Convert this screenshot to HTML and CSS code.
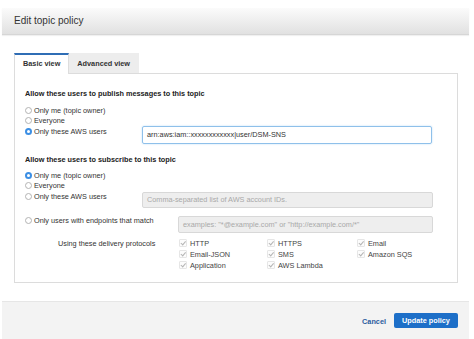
FILE: index.html
```html
<!DOCTYPE html>
<html lang="en">

<head>
    <meta charset="UTF-8">
    <meta name="viewport" content="width=device-width, initial-scale=1.0">
    <title>Edit topic policy</title>
    <link rel="stylesheet" href="styles.css">
</head>

<body>
    <div class="modal">
        <div class="modal-header">Edit topic policy</div>

        <div class="modal-body">
            <div class="tabs">
                <div class="tab active">Basic view</div>
                <div class="tab">Advanced view</div>
            </div>

            <div class="panel">
                <div class="section-title">Allow these users to publish messages to this topic</div>
                <div class="option"><span class="radio"></span>Only me (topic owner)</div>
                <div class="option"><span class="radio"></span>Everyone</div>
                <div class="option-row first">
                    <div class="option"><span class="radio checked"></span>Only these AWS users</div>
                    <div class="field focus">arn:aws:iam::xxxxxxxxxxxx|user/DSM-SNS</div>
                </div>

                <div class="section-title second">Allow these users to subscribe to this topic</div>
                <div class="option"><span class="radio checked"></span>Only me (topic owner)</div>
                <div class="option"><span class="radio"></span>Everyone</div>
                <div class="option-row ids">
                    <div class="option"><span class="radio"></span>Only these AWS users</div>
                    <div class="field disabled">Comma-separated list of AWS account IDs.</div>
                </div>
                <div class="option-row endpoints">
                    <div class="option wide"><span class="radio"></span>Only users with endpoints that match</div>
                    <div class="field disabled">examples: "*@example.com" or "http://example.com/*"</div>
                </div>

                <div class="protocols">
                    <div class="protocols-label">Using these delivery protocols</div>
                    <div class="protocol-grid">
                        <div class="check"><span class="box"></span>HTTP</div>
                        <div class="check"><span class="box"></span>HTTPS</div>
                        <div class="check"><span class="box"></span>Email</div>
                        <div class="check"><span class="box"></span>Email-JSON</div>
                        <div class="check"><span class="box"></span>SMS</div>
                        <div class="check"><span class="box"></span>Amazon SQS</div>
                        <div class="check"><span class="box"></span>Application</div>
                        <div class="check"><span class="box"></span>AWS Lambda</div>
                    </div>
                </div>
            </div>
        </div>

        <div class="modal-footer">
            <a class="cancel">Cancel</a>
            <button class="primary">Update policy</button>
        </div>
    </div>
</body>

</html>
```

FILE: styles.css
```css
body {
    margin: 0;
    background: #fff;
    font-family: "Liberation Sans", Arial, sans-serif;
    color: #333;
}

.modal {
    margin: 8px 5px 0 2px;
}

.modal-header {
    height: 26px;
    line-height: 26px;
    padding-left: 12px;
    font-size: 10px;
    color: #333;
    background: linear-gradient(#fbfbfb, #e1e1e1);
    border-bottom: 1px solid #d6d6d6;
    box-shadow: 0 1px 1px rgba(0, 0, 0, 0.06);
}

.modal-body {
    padding: 18px 11px 18px 12px;
}

.tabs {
    display: flex;
    height: 20px;
}

.tab {
    padding: 0 8px;
    line-height: 19px;
    font-size: 7.3px;
    font-weight: bold;
    color: #333;
    background: #ededed;
    border-top: 1px solid #ededed;
}

.tab.active {
    background: #fff;
    border-top: 2px solid #2f6db5;
    border-left: 1px solid #ddd;
    border-right: 1px solid #ddd;
    line-height: 18px;
    margin-bottom: -1px;
    position: relative;
}

.tab:not(.active) {
    width: 54px;
}

.panel {
    border: 1px solid #dcdcdc;
    padding: 14px 10px 11px 10px;
    font-size: 7.3px;
}

.section-title {
    font-weight: bold;
    color: #222;
    line-height: 11px;
    margin-bottom: 6px;
}

.section-title.second {
    margin-top: 10px;
    margin-bottom: 5px;
}

.option {
    display: flex;
    align-items: center;
    height: 10.5px;
    width: 117px;
    white-space: nowrap;
}

.option.wide {
    width: 153px;
}

.radio {
    width: 5px;
    height: 5px;
    border: 1px solid #b3b3b3;
    border-radius: 50%;
    background: #fff;
    margin-right: 2px;
    flex-shrink: 0;
}

.radio.checked {
    width: 3px;
    height: 3px;
    border: 2px solid #3c8fe4;
    background: #fff;
}

.option-row {
    display: flex;
    align-items: flex-start;
}

.option-row .option {
    margin-top: 0.5px;
}

.field {
    box-sizing: border-box;
    padding-left: 4px;
    border-radius: 2px;
    white-space: nowrap;
}

.field.focus {
    width: 290px;
    height: 18px;
    line-height: 16px;
    border: 1px solid #8fc0ea;
    box-shadow: 0 0 2px #b8dbf6;
    color: #333;
}

.ids .field {
    width: 291px;
    height: 16px;
    line-height: 14px;
    margin-top: 0.5px;
}

.endpoints {
    margin-top: 7px;
}

.endpoints .field {
    width: 255px;
    height: 17px;
    line-height: 15px;
    margin-top: 1px;
}

.field.disabled {
    background: #eeeeee;
    border: 1px solid #d8d8d8;
    color: #a9a9a9;
}

.protocols {
    display: flex;
    margin-top: 5px;
}

.protocols-label {
    width: 121px;
    padding-left: 33px;
    line-height: 11px;
    white-space: nowrap;
}

.protocol-grid {
    display: grid;
    grid-template-columns: 88px 90px auto;
    grid-auto-rows: 11px;
    color: #444;
}

.check {
    display: flex;
    align-items: center;
    white-space: nowrap;
}

.box {
    position: relative;
    width: 6px;
    height: 6px;
    border: 1px solid #e6e6e6;
    border-radius: 1px;
    margin-right: 3px;
    background: #fcfcfc;
}

.box:after {
    content: "";
    position: absolute;
    left: 2px;
    top: 0px;
    width: 1.5px;
    height: 3.5px;
    border: solid #b4b4b4;
    border-width: 0 1px 1px 0;
    transform: rotate(40deg);
}

.modal-footer {
    display: flex;
    justify-content: flex-end;
    align-items: flex-start;
    height: 50px;
    padding-right: 11px;
    background: #f3f3f3;
    border-top: 1px solid #e6e6e6;
}

.cancel {
    margin-top: 15px;
    margin-right: 8px;
    font-size: 7.3px;
    font-weight: bold;
    color: #2c5c9e;
}

.primary {
    margin-top: 11px;
    width: 64px;
    height: 15px;
    padding: 0;
    border: none;
    border-radius: 2px;
    background: #1d6fc8;
    color: #fff;
    font-family: "Liberation Sans", Arial, sans-serif;
    font-size: 7.3px;
    font-weight: bold;
}
```
